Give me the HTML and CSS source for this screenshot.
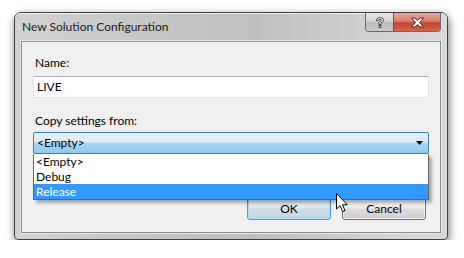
FILE: index.html
```html
<!DOCTYPE html>
<html>
<head>
<meta charset="utf-8">
<link rel="stylesheet" href="styles.css">
</head>
<body>
<div class="window">
  <div class="titlebar">
    <div class="title">New Solution Configuration</div>
    <div class="caption-buttons">
      <div class="cap-btn help">
        <svg width="12" height="13" viewBox="0 0 12 13"><path d="M2.5 4.5 Q2.5 1.5 6 1.5 Q9.5 1.5 9.5 4.2 Q9.5 6 7 7 L7 8.5 L5 8.5 L5 6.2 Q7.5 5.3 7.5 4.2 Q7.5 3.3 6 3.3 Q4.5 3.3 4.5 4.5 Z M5 9.5 L7 9.5 L7 11.5 L5 11.5 Z" fill="#fff" stroke="#3c4350" stroke-width="1"/></svg>
      </div>
      <div class="cap-btn close">
        <svg width="15" height="11" viewBox="0 0 15 11"><path d="M1.5 1 L5 1 L7.5 3.5 L10 1 L13.5 1 L9.5 5.5 L13.5 10 L10 10 L7.5 7.5 L5 10 L1.5 10 L5.5 5.5 Z" fill="#fff" stroke="#4a2a26" stroke-width="1" stroke-linejoin="round"/></svg>
      </div>
    </div>
  </div>
  <div class="client">
    <div class="label">Name:</div>
    <div class="textbox">LIVE</div>
    <div class="label label2">Copy settings from:</div>
    <div class="combo-wrap">
      <div class="combo">
        <span>&lt;Empty&gt;</span>
        <svg class="arrow" width="7" height="4" viewBox="0 0 7 4"><path d="M0 0 H7 L3.5 4 Z" fill="#000"/></svg>
      </div>
      <div class="droplist">
        <div class="item">&lt;Empty&gt;</div>
        <div class="item">Debug</div>
        <div class="item selected">Release</div>
      </div>
      <svg class="cursor" width="13" height="20" viewBox="0 0 13 20"><path d="M0.5 0.5 L0.5 16 L4 12.7 L6.6 18.6 L9 17.6 L6.5 11.8 L11.3 11.8 Z" fill="#fff" stroke="#000" stroke-width="1" stroke-linejoin="miter"/></svg>
    </div>
    <div class="buttons">
      <div class="btn default">OK</div>
      <div class="btn">Cancel</div>
    </div>
  </div>
</div>
</body>
</html>
```
FILE: styles.css
```css
html, body {
  margin: 0;
  padding: 0;
  background: #ffffff;
}
body {
  padding: 12px 0 0 14px;
  font-family: "Lato", "Noto Sans", sans-serif;
  font-size: 12px;
  color: #000;
}
.window {
  width: 432px;
  height: 226px;
  border: 1px solid #404040;
  border-radius: 7px 7px 4px 4px;
  background: linear-gradient(90deg, #d2d2d2 0%, #c6c6c6 30%, #bfbfbf 55%, #cfcfcf 80%, #d9d9d9 100%);
  box-shadow: 1px 3px 9px rgba(0, 0, 0, 0.55);
  display: flex;
  flex-direction: column;
  position: relative;
}
.titlebar {
  height: 28px;
  display: flex;
  justify-content: space-between;
  align-items: flex-start;
  box-shadow: inset 0 1px 0 rgba(255,255,255,0.7);
  border-radius: 6px 6px 0 0;
}
.title {
  padding: 6px 0 0 7px;
  font-size: 12px;
  color: #1a1a1a;
  line-height: 16px;
}
.caption-buttons {
  display: flex;
  margin-right: 6px;
  border: 1px solid #6b6b6b;
  border-top: none;
  border-radius: 0 0 4px 4px;
  overflow: hidden;
  height: 18px;
}
.cap-btn {
  display: flex;
  align-items: center;
  justify-content: center;
  height: 18px;
}
.help {
  width: 27px;
  background: linear-gradient(180deg, #e6e6e6 0%, #d4d4d4 45%, #b9b9b9 55%, #c9c9c9 100%);
  border-right: 1px solid #7a4e48;
}
.close {
  width: 46px;
  background: linear-gradient(180deg, #e8a598 0%, #d88070 45%, #c5432f 55%, #d2654f 100%);
}
.client {
  margin: 0 6px 6px 6px;
  flex: 1;
  border: 1px solid #8e8e8e;
  background: #f0f0f0;
  box-shadow: 0 0 0 1px #e4e4e4;
  padding: 13px 13px 0 11px;
  display: flex;
  flex-direction: column;
}
.label {
  line-height: 15px;
  height: 15px;
  padding-left: 2px;
}
.label2 {
  margin-top: 15px;
}
.textbox {
  margin-top: 6px;
  height: 20px;
  background: #fff;
  border: 1px solid #e2e3ea;
  border-top-color: #abadb3;
  border-bottom-color: #e3e9ef;
  line-height: 20px;
  padding-left: 3px;
  box-sizing: content-box;
  width: 391px;
}
.combo-wrap {
  margin-top: 4px;
  position: relative;
  width: 396px;
}
.combo {
  height: 20px;
  border: 1px solid #3c7fb1;
  border-radius: 2px;
  background: linear-gradient(180deg, #e7f3fb 0%, #d6ebf8 45%, #a8d5f1 52%, #8ecbee 100%);
  display: flex;
  align-items: center;
  justify-content: space-between;
  padding: 0 5px 0 3px;
  line-height: 20px;
}
.arrow {
  display: block;
}
.droplist {
  position: absolute;
  left: 0;
  top: 22px;
  width: 394px;
  border: 1px solid #646464;
  border-top: none;
  background: #fff;
  box-shadow: 3px 3px 3px rgba(0, 0, 0, 0.3);
  z-index: 2;
}
.item {
  height: 15px;
  line-height: 15px;
  padding-left: 2px;
}
.item.selected {
  background: #3399ff;
  color: #fff;
}
.cursor {
  position: absolute;
  left: 303px;
  top: 61px;
  z-index: 3;
}
.buttons {
  margin-top: 43px;
  display: flex;
  justify-content: flex-end;
  gap: 11px;
  padding-right: 1px;
}
.btn {
  width: 82px;
  height: 21px;
  border: 1px solid #707070;
  border-radius: 3px;
  background: linear-gradient(180deg, #f2f2f2 0%, #ebebeb 48%, #dddddd 52%, #cfcfcf 100%);
  box-shadow: inset 0 0 0 1px rgba(255,255,255,0.7);
  text-align: center;
  line-height: 21px;
}
.btn.default {
  border-color: #3c9fd8;
  background: linear-gradient(180deg, #e5eef4 0%, #dde7ee 48%, #cfdde8 52%, #c6d6e3 100%);
  box-shadow: inset 0 0 0 1px #a8dcf5;
}
```
